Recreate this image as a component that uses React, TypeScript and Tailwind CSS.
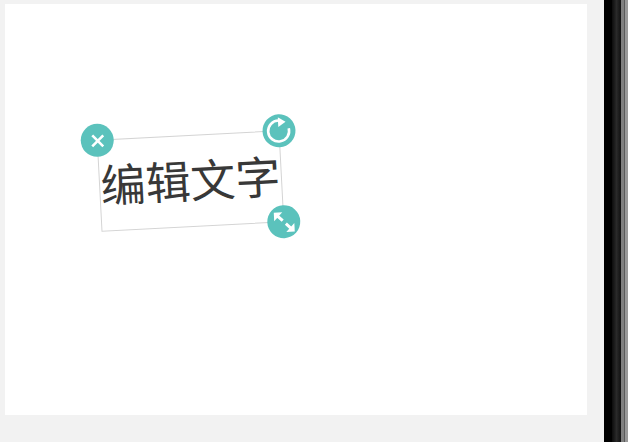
// App.tsx
function Sticker() {
  return (
    <div className="absolute left-[94px] top-[131px] w-[183px] h-[92px] pb-[6px] -rotate-[3deg] border border-[#d4d4d4] flex items-center justify-center">
      <span className="text-[45px] leading-none whitespace-nowrap text-[#383838] font-['Noto_Sans_CJK_SC',sans-serif]">
        编辑文字
      </span>
      <button className="absolute -left-[17px] -top-[17px] w-[33px] h-[33px] rounded-full bg-[#5bc2bc] flex items-center justify-center rotate-[3deg]">
        <svg width="16" height="16" viewBox="0 0 16 16" fill="none" stroke="white" strokeWidth="2.6">
          <path d="M2.5 2.5L13.5 13.5M13.5 2.5L2.5 13.5" />
        </svg>
      </button>
      <button className="absolute -right-[17px] -top-[17px] w-[33px] h-[33px] rounded-full bg-[#5bc2bc] flex items-center justify-center">
        <svg width="27" height="27" viewBox="0 0 27 27" fill="none">
          <path d="M13.5 3.2A10.5 10.5 0 1 0 23.4 11.5" stroke="white" strokeWidth="2.6" />
          <path d="M13 0L20.5 4.8L13 9.6Z" fill="white" />
        </svg>
      </button>
      <button className="absolute -right-[17px] -bottom-[17px] w-[33px] h-[33px] rounded-full bg-[#5bc2bc] flex items-center justify-center">
        <svg width="22" height="22" viewBox="0 0 22 22" fill="none">
          <path d="M4 4L9.5 9.5M18 18L12.5 12.5" stroke="white" strokeWidth="3" />
          <path d="M1 1H9.5L1 9.5Z" fill="white" />
          <path d="M21 21H12.5L21 12.5Z" fill="white" />
        </svg>
      </button>
    </div>
  );
}

export default function App() {
  return (
    <div className="w-[628px] h-[442px] overflow-hidden bg-[#f2f2f2] flex">
      <div className="pl-[5px] pt-[4px] w-[604px]">
        <div className="relative w-[582px] h-[411px] bg-white">
          <Sticker />
        </div>
      </div>
      <div className="flex-1 h-full flex">
        <div className="w-[8px] bg-black" />
        <div className="w-[9px] bg-gradient-to-r from-[#0c0c0c] via-[#2a2a2a] to-[#111111]" />
        <div className="w-[3px] bg-[#808080]" />
        <div className="w-[1px] bg-[#5a5a5a]" />
        <div className="flex-1 bg-[#999999]" />
      </div>
    </div>
  );
}
